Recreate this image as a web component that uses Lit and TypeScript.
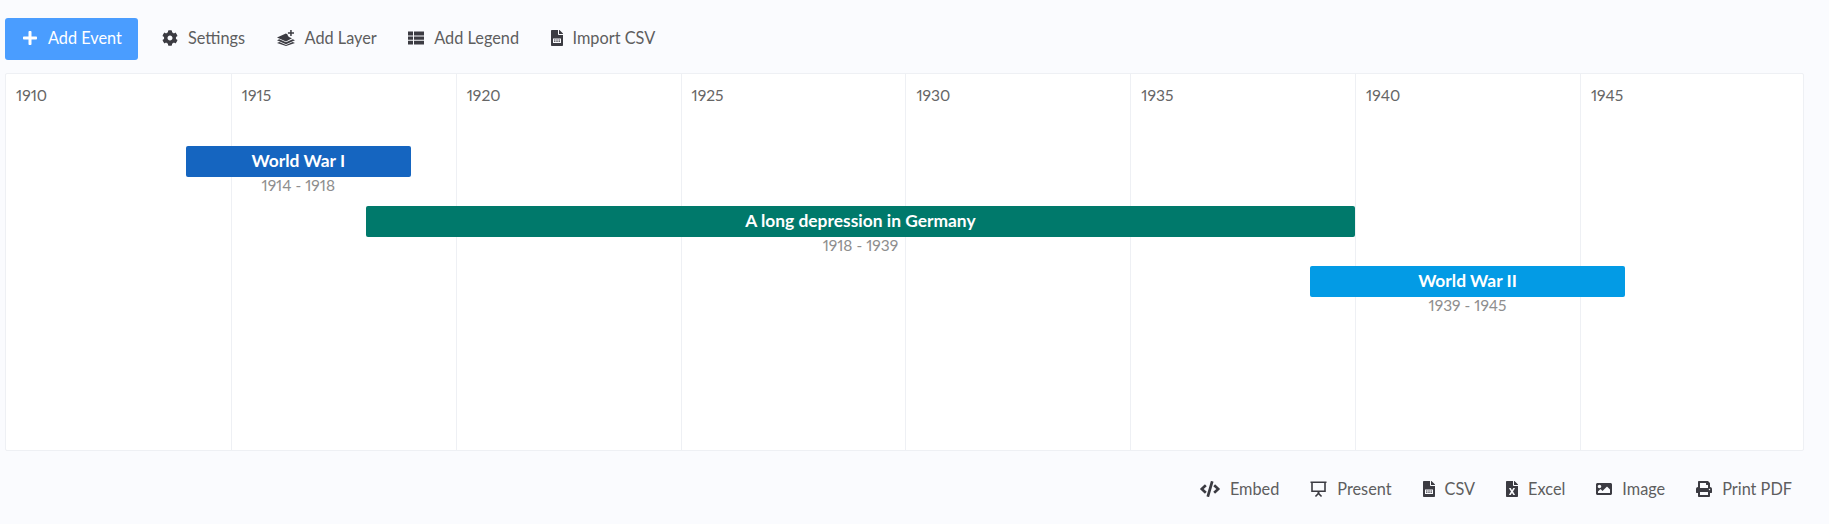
import { LitElement, html, css, svg } from "lit";
import { customElement } from "lit/decorators.js";

const FILE_BODY = "M224 136V0H24C10.7 0 0 10.7 0 24v464c0 13.3 10.7 24 24 24h336c13.3 0 24-10.7 24-24V160H248c-13.2 0-24-10.8-24-24z";
const FILE_FOLD = "M384 121.9v6.1H256V0h6.1c6.4 0 12.5 2.5 17 7l97.9 98c4.5 4.5 7 10.6 7 16.9z";

const icons: Record<string, { vb: string; w: number; h: number; body: unknown }> = {
  plus: { vb: "0 0 448 512", w: 14, h: 16, body: svg`<path d="M416 208H272V64c0-17.67-14.33-32-32-32h-32c-17.67 0-32 14.33-32 32v144H32c-17.67 0-32 14.33-32 32v32c0 17.67 14.33 32 32 32h144v144c0 17.67 14.33 32 32 32h32c17.67 0 32-14.33 32-32V304h144c17.67 0 32-14.33 32-32v-32c0-17.67-14.33-32-32-32z"/>` },
  cog: { vb: "0 0 512 512", w: 16, h: 16, body: svg`<path d="M487.4 315.7l-42.6-24.6c4.3-23.2 4.3-47 0-70.2l42.6-24.6c4.9-2.8 7.1-8.6 5.5-14-11.1-35.6-30-67.8-54.7-94.6-3.8-4.1-10-5.1-14.8-2.3L380.8 110c-17.9-15.4-38.5-27.3-60.8-35.1V25.8c0-5.6-3.9-10.5-9.4-11.7-36.7-8.2-74.3-7.8-109.2 0-5.5 1.2-9.4 6.1-9.4 11.7V75c-22.2 7.9-42.8 19.8-60.8 35.1L88.7 85.5c-4.9-2.8-11-1.9-14.8 2.3-24.7 26.7-43.6 58.9-54.7 94.6-1.7 5.4.6 11.2 5.5 14L67.3 221c-4.3 23.2-4.3 47 0 70.2l-42.6 24.6c-4.9 2.8-7.1 8.6-5.5 14 11.1 35.6 30 67.8 54.7 94.6 3.8 4.1 10 5.1 14.8 2.3l42.6-24.6c17.9 15.4 38.5 27.3 60.8 35.1v49.2c0 5.6 3.9 10.5 9.4 11.7 36.7 8.2 74.3 7.8 109.2 0 5.5-1.2 9.4-6.1 9.4-11.7v-49.2c22.2-7.9 42.8-19.8 60.8-35.1l42.6 24.6c4.9 2.8 11 1.9 14.8-2.3 24.7-26.7 43.6-58.9 54.7-94.6 1.5-5.5-.7-11.3-5.6-14.1zM256 336c-44.1 0-80-35.9-80-80s35.9-80 80-80 80 35.9 80 80-35.9 80-80 80z"/>` },
  layer: { vb: "0 0 18 16", w: 18, h: 16, body: svg`<path d="M13.2 0h1.5v2.2H17v1.5h-2.3V6h-1.5V3.7h-2.3V2.2h2.3z"/><path d="M0 7.6L8.9 3.6 10.4 4.3c.2 1.5 1.2 2.7 2.6 3.2L15 8.2 9 11.4z"/><path d="M2.3 9.2L0 10.3l9 3.9 9-3.9-2.3-1.1L9 12.2z"/><path d="M2.3 12L0 13.1 9 16l9-2.9-2.3-1.1L9 15z"/>` },
  table: { vb: "0 0 16 16", w: 16, h: 16, body: svg`<path d="M0 1.5h5v4H0z M6 1.5h10v4H6z M0 6.5h5v3.2H0z M6 6.5h10v3.2H6z M0 10.7h5v3.8H0z M6 10.7h10v3.8H6z"/>` },
  csv: { vb: "0 0 384 512", w: 12, h: 16, body: svg`<path fill-rule="evenodd" d="${FILE_BODY} M64 272v144h256V272z M96 304h48v28H96z M168 304h48v28h-48z M240 304h48v28h-48z M96 356h48v28H96z M168 356h48v28h-48z M240 356h48v28h-48z"/><path d="${FILE_FOLD}"/>` },
  excel: { vb: "0 0 384 512", w: 12, h: 16, body: svg`<path d="M224 136V0H24C10.7 0 0 10.7 0 24v464c0 13.3 10.7 24 24 24h336c13.3 0 24-10.7 24-24V160H248c-13.2 0-24-10.8-24-24zm60.1 106.5L224 336l60.1 93.5c5.1 8-.6 18.5-10.1 18.5h-34.9c-4.4 0-8.5-2.4-10.6-6.3C208.9 405.5 192 373 192 373c-6.1 14.1-9.5 19.1-36.6 68.8-2.1 3.9-6.1 6.3-10.5 6.3H110c-9.5 0-15.2-10.5-10.1-18.5l60.3-93.5-60.3-93.5c-5.2-8 .6-18.5 10.1-18.5h34.8c4.4 0 8.5 2.4 10.6 6.3 26.1 48.8 20 33.6 36.6 68.5 0 0 6.1-11.7 36.6-68.5 2.1-3.9 6.2-6.3 10.6-6.3H274c9.5-.1 15.2 10.4 10.1 18.4z"/><path d="${FILE_FOLD}"/>` },
  code: { vb: "0 0 640 512", w: 20, h: 16, body: svg`<path d="M278.9 511.5l-61-17.7c-6.4-1.8-10-8.5-8.2-14.9L346.2 8.7c1.8-6.4 8.5-10 14.9-8.2l61 17.7c6.4 1.8 10 8.5 8.2 14.9L293.8 503.3c-1.9 6.4-8.5 10.1-14.9 8.2zm-114-112.2l43.5-46.4c4.6-4.9 4.3-12.7-.8-17.2L117 256l90.6-79.7c5.1-4.5 5.5-12.3.8-17.2l-43.5-46.4c-4.5-4.8-12.1-5.1-17-.5L3.8 247.2c-5.1 4.7-5.1 12.8 0 17.5l144.1 135.1c4.9 4.6 12.5 4.4 17-.5zm327.2.6l144.1-135.1c5.1-4.7 5.1-12.8 0-17.5L492.1 112.1c-4.8-4.5-12.4-4.3-17 .5L431.6 159c-4.6 4.9-4.3 12.7.8 17.2L523 256l-90.6 79.7c-5.1 4.5-5.5 12.3-.8 17.2l43.5 46.4c4.5 4.9 12.1 5.1 17 .6z"/>` },
  present: { vb: "0 0 16 16", w: 17, h: 16, body: svg`<path fill-rule="evenodd" d="M0 .5h16V2h-.7v9H.7V2H0z M2.3 2v7.4h11.4V2z"/><path d="M7 11h2v1.2l2.6 2.7-1.1 1L8 13.6l-2.5 2.3-1.1-1L7 12.2z"/>` },
  image: { vb: "0 0 512 512", w: 16, h: 16, body: svg`<path d="M464 448H48c-26.51 0-48-21.49-48-48V112c0-26.51 21.49-48 48-48h416c26.51 0 48 21.49 48 48v288c0 26.51-21.49 48-48 48zM112 120c-30.928 0-56 25.072-56 56s25.072 56 56 56 56-25.072 56-56-25.072-56-56-56zM64 384h384V272l-87.515-87.515c-4.686-4.686-12.284-4.686-16.971 0L208 320l-55.515-55.515c-4.686-4.686-12.284-4.686-16.971 0L64 336v48z"/>` },
  print: { vb: "0 0 512 512", w: 16, h: 16, body: svg`<path d="M448 192V77.25c0-8.49-3.37-16.62-9.37-22.63L393.37 9.37c-6-6-14.14-9.37-22.63-9.37H96C78.33 0 64 14.33 64 32v160c-35.35 0-64 28.65-64 64v112c0 8.84 7.16 16 16 16h48v96c0 17.67 14.33 32 32 32h320c17.67 0 32-14.33 32-32v-96h48c8.84 0 16-7.16 16-16V256c0-35.35-28.65-64-64-64zm-64 256H128v-96h256v96zm0-224H128V64h192v48c0 8.84 7.16 16 16 16h48v96zm48 72c-13.25 0-24-10.75-24-24 0-13.26 10.75-24 24-24s24 10.74 24 24c0 13.25-10.75 24-24 24z"/>` },
};

const START = 1910;
const ticks = [1910, 1915, 1920, 1925, 1930, 1935, 1940, 1945];
const events = [
  { title: "World War I", from: 1914, to: 1918, color: "#1565c0" },
  { title: "A long depression in Germany", from: 1918, to: 1939, color: "#00796b" },
  { title: "World War II", from: 1939, to: 1945, color: "#039be5" },
];
const topTools = [
  ["cog", "Settings"],
  ["layer", "Add Layer"],
  ["table", "Add Legend"],
  ["csv", "Import CSV"],
];
const bottomTools = [
  ["code", "Embed"],
  ["present", "Present"],
  ["csv", "CSV"],
  ["excel", "Excel"],
  ["image", "Image"],
  ["print", "Print PDF"],
];

const icon = (name: string) => {
  const i = icons[name];
  return html`<svg class="icon" viewBox=${i.vb} width=${i.w} height=${i.h} fill="currentColor" aria-hidden="true">${i.body}</svg>`;
};

@customElement("app-root")
export class AppRoot extends LitElement {
  static styles = css`
    :host {
      display: flex;
      flex-direction: column;
      height: 524px;
      box-sizing: border-box;
      background: #fafbfe;
      color: #5e5e5e;
      font-family: "Lato", "Open Sans", sans-serif;
      font-size: 16.3px;
      font-variant-numeric: proportional-nums;
      overflow: hidden;
    }
    .toolbar {
      display: flex;
      align-items: center;
      gap: 31.5px;
      height: 42px;
      margin: 18px 0 13px 5px;
    }
    .toolbar .tool {
      margin-bottom: 2px;
    }
    .toolbar .add {
      display: flex;
      align-items: center;
      gap: 11px;
      height: 42px;
      box-sizing: border-box;
      width: 133px;
      padding: 0 0 2px 18px;
      margin: 0 -7.5px 0 0;
      border-radius: 3px;
      background: #4a9dff;
      color: #fff;
    }
    .tool {
      display: flex;
      align-items: center;
      gap: 10px;
      white-space: nowrap;
    }
    .tool span {
      margin-top: -2px;
    }
    .icon {
      flex: none;
      color: #3b3b42;
    }
    .add .icon {
      color: #fff;
    }
    .timeline {
      display: grid;
      grid-template-columns: repeat(39, 44.97px) 1fr;
      grid-template-rows: 72px 60px 60px 60px 1fr;
      height: 378px;
      margin: 0 25px 0 5px;
      box-sizing: border-box;
      background: #fff;
      border: 1px solid #eef0f4;
      border-radius: 2px;
    }
    .tick {
      grid-row: 1 / -1;
      padding: 11px 0 0 10px;
      border-left: 1px solid #eef0f4;
      color: #666;
      font-size: 15.6px;
      line-height: 20px;
    }
    .tick.first {
      border-left: none;
    }
    .event {
      display: flex;
      flex-direction: column;
      align-items: center;
      min-width: 0;
      z-index: 1;
    }
    .bar {
      align-self: stretch;
      height: 31px;
      line-height: 29px;
      border-radius: 2px;
      color: #fff;
      font-size: 17.4px;
      font-weight: 700;
      text-align: center;
      white-space: nowrap;
    }
    .dates {
      color: #8e8e8e;
      font-size: 15.5px;
      line-height: 16px;
    }
    .footer {
      display: flex;
      justify-content: flex-end;
      align-items: center;
      gap: 31px;
      height: 20px;
      margin: 28px 37px 0 0;
    }
  `;

  render() {
    return html`
      <div class="toolbar">
        <div class="tool add">${icon("plus")}<span>Add Event</span></div>
        ${topTools.map(([n, t]) => html`<div class="tool">${icon(n)}<span>${t}</span></div>`)}
      </div>
      <div class="timeline">
        ${ticks.map(
          (y, i) => html`<div
            class="tick ${i === 0 ? "first" : ""}"
            style="grid-column:${y - START + 1} / span 5"
          >${y}</div>`
        )}
        ${events.map(
          (e, i) => html`<div
            class="event"
            style="grid-row:${i + 2};grid-column:${e.from - START + 1} / ${e.to - START + 2}"
          >
            <div class="bar" style="background:${e.color}">${e.title}</div>
            <div class="dates">${e.from} - ${e.to}</div>
          </div>`
        )}
      </div>
      <div class="footer">
        ${bottomTools.map(([n, t]) => html`<div class="tool">${icon(n)}<span>${t}</span></div>`)}
      </div>
    `;
  }
}
